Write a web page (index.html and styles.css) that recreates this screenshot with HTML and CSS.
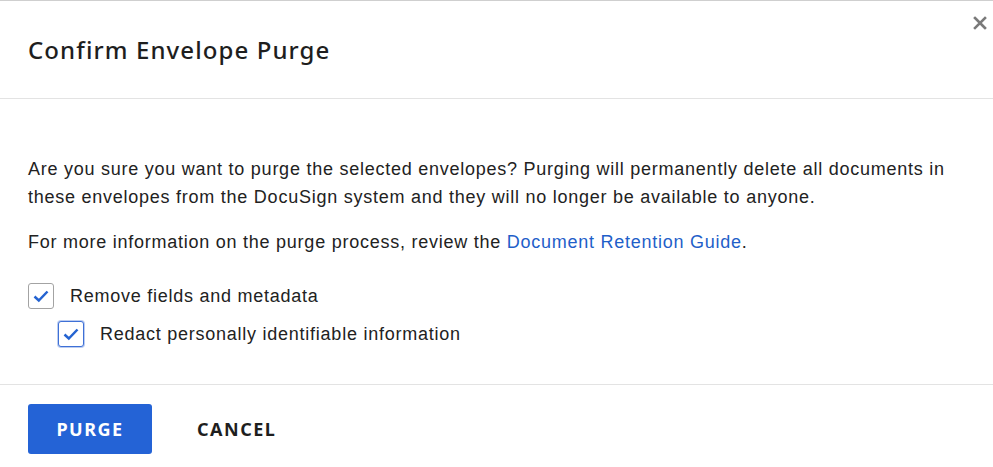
FILE: index.html
```html
<!DOCTYPE html>
<html lang="en">
<head>
<meta charset="utf-8">
<title>Confirm Envelope Purge</title>
<link rel="stylesheet" href="styles.css">
</head>
<body>
<div class="dialog">
  <header class="dialog-header">
    <h1 class="dialog-title">Confirm Envelope Purge</h1>
    <button class="close-btn" aria-label="Close">
      <svg width="14" height="14" viewBox="0 0 14 14"><path d="M2 2 L12 12 M12 2 L2 12" stroke="#7a7a7a" stroke-width="2.6" stroke-linecap="square"/></svg>
    </button>
  </header>
  <section class="dialog-body">
    <p class="text">Are you sure you want to purge the selected envelopes? Purging will permanently delete all documents in these envelopes from the DocuSign system and they will no longer be available to anyone.</p>
    <p class="text">For more information on the purge process, review the <a class="link" href="#">Document Retention Guide</a>.</p>
    <div class="options">
      <label class="check-row">
        <span class="box"><svg width="16" height="14" viewBox="0 0 16 14"><path d="M1.5 7.5 L5.8 11.5 L14.5 2.5" fill="none" stroke="#2463d1" stroke-width="2.5"/></svg></span>
        <span class="check-label">Remove fields and metadata</span>
      </label>
      <label class="check-row nested">
        <span class="box focused"><svg width="16" height="14" viewBox="0 0 16 14"><path d="M1.5 7.5 L5.8 11.5 L14.5 2.5" fill="none" stroke="#2463d1" stroke-width="2.5"/></svg></span>
        <span class="check-label">Redact personally identifiable information</span>
      </label>
    </div>
  </section>
  <footer class="dialog-footer">
    <button class="btn btn-primary">PURGE</button>
    <button class="btn btn-text">CANCEL</button>
  </footer>
</div>
</body>
</html>
```

FILE: styles.css
```css
html, body {
  margin: 0;
  padding: 0;
  background: #ffffff;
}
body {
  font-family: "Liberation Sans", Arial, sans-serif;
  color: #262626;
}
.dialog {
  border-top: 1px solid #cfcfcf;
  width: 993px;
}
.dialog-header {
  height: 97px;
  border-bottom: 1px solid #e3e3e3;
  display: flex;
  align-items: center;
  justify-content: space-between;
  padding: 0 0 0 28px;
  position: relative;
}
.dialog-title {
  margin: 0;
  font-family: "Noto Sans", sans-serif;
  font-weight: 500;
  font-size: 24px;
  color: #1e1e1e;
  letter-spacing: 1.1px;
}
.close-btn {
  position: absolute;
  top: 15px;
  right: 6px;
  background: none;
  border: 0;
  padding: 0;
  width: 14px;
  height: 14px;
  cursor: pointer;
}
.close-btn svg { display: block; }
.dialog-body {
  padding: 56px 28px 37px;
}
.text {
  margin: 0 0 17px;
  font-size: 18px;
  letter-spacing: 0.75px;
  line-height: 28px;
  color: #222222;
}
.link {
  color: #1f5fc9;
  text-decoration: none;
}
.options {
  display: flex;
  flex-direction: column;
  gap: 12px;
  margin-top: 27px;
}
.check-row {
  display: flex;
  align-items: center;
  gap: 16px;
  font-size: 18px;
  letter-spacing: 0.75px;
}
.check-row.nested {
  padding-left: 30px;
}
.box {
  width: 26px;
  height: 26px;
  box-sizing: border-box;
  border: 1px solid #a3a3a3;
  border-radius: 3px;
  display: flex;
  align-items: center;
  justify-content: center;
  background: #fff;
  flex: none;
}
.box svg { display: block; }
.box.focused {
  border-color: #3e70d6;
  box-shadow: 0 0 0 1px rgba(62,112,214,0.35);
}
.check-label {
  color: #222222;
}
.dialog-footer {
  border-top: 1px solid #e3e3e3;
  padding: 19px 28px 20px;
  display: flex;
  align-items: center;
  gap: 26px;
}
.btn {
  font-family: "Noto Sans", sans-serif;
  font-weight: 700;
  font-size: 18px;
  letter-spacing: 1.5px;
  border: 0;
  cursor: pointer;
}
.btn-primary {
  background: #2463d6;
  color: #ffffff;
  width: 124px;
  height: 50px;
  border-radius: 3px;
}
.btn-text {
  background: none;
  color: #1e1e1e;
  padding: 0 19px;
  height: 50px;
}
```
